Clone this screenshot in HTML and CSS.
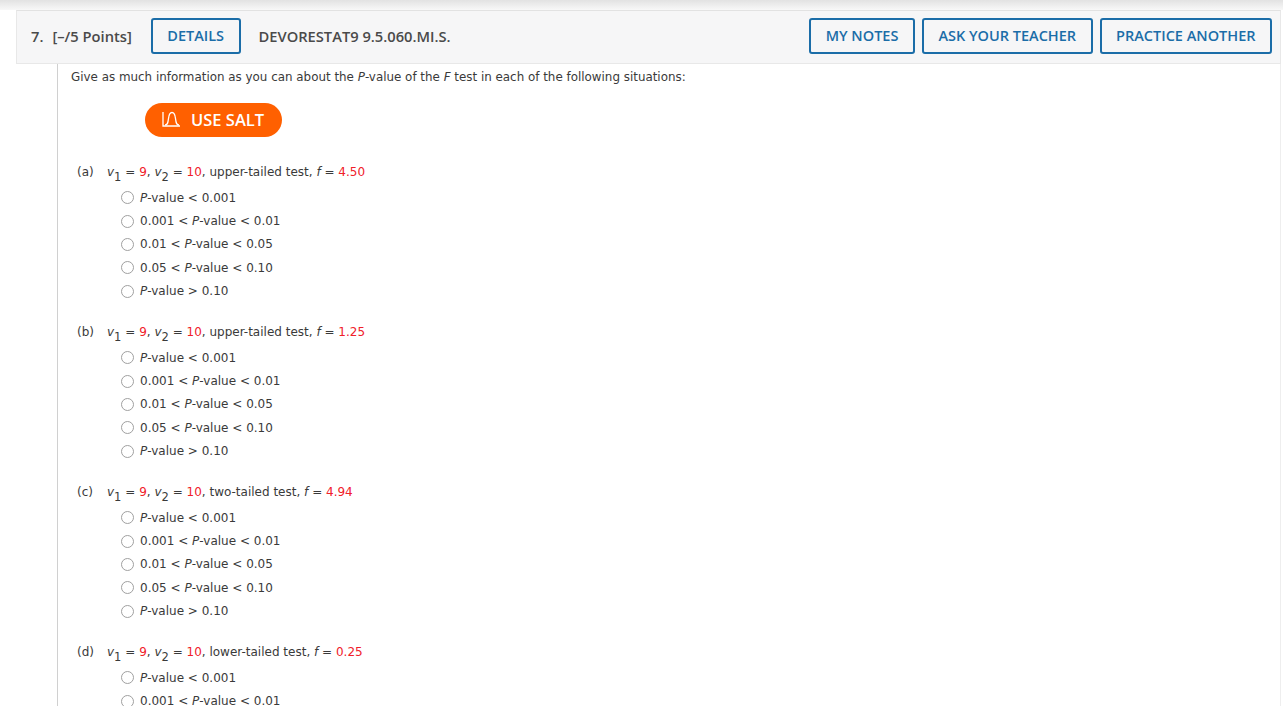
FILE: index.html
```html
<!DOCTYPE html>
<html lang="en">
<head>
<meta charset="utf-8">
<title>Question 7</title>
<link rel="stylesheet" href="styles.css">
</head>
<body>
<div class="shade"></div>
<header class="bar">
  <span class="num">7.</span>
  <span class="pts">[–/5 Points]</span>
  <button class="btn details">DETAILS</button>
  <span class="code">DEVORESTAT9 9.5.060.MI.S.</span>
  <div class="actions">
    <button class="btn">MY NOTES</button>
    <button class="btn">ASK YOUR TEACHER</button>
    <button class="btn">PRACTICE ANOTHER</button>
  </div>
</header>
<main class="content">
  <p class="intro">Give as much information as you can about the <i>P</i>-value of the <i>F</i> test in each of the following situations:</p>
  <button class="salt">
    <svg class="salt-icon" width="19" height="18" viewBox="0 0 19 18" fill="none" stroke="#fff" stroke-width="1.300"><path d="M2 2v14h17"/><path d="M4 15c2.500 0 3-2 3.500-6.500S9 2.500 11 2.500s3 1.500 3.500 6 1 6.500 3.500 6.500"/></svg>
    USE SALT
  </button>
  <section class="part">
    <div class="q"><span class="lbl">(a)</span><span><i>v</i><sub>1</sub> = <b>9</b>, <i>v</i><sub>2</sub> = <b>10</b>, upper-tailed test, <i>f</i> = <b>4.50</b></span></div>
    <label class="opt"><span class="radio"></span><span><i>P</i>-value &lt; 0.001</span></label>
    <label class="opt"><span class="radio"></span><span>0.001 &lt; <i>P</i>-value &lt; 0.01</span></label>
    <label class="opt"><span class="radio"></span><span>0.01 &lt; <i>P</i>-value &lt; 0.05</span></label>
    <label class="opt"><span class="radio"></span><span>0.05 &lt; <i>P</i>-value &lt; 0.10</span></label>
    <label class="opt"><span class="radio"></span><span><i>P</i>-value &gt; 0.10</span></label>
  </section>
  <section class="part">
    <div class="q"><span class="lbl">(b)</span><span><i>v</i><sub>1</sub> = <b>9</b>, <i>v</i><sub>2</sub> = <b>10</b>, upper-tailed test, <i>f</i> = <b>1.25</b></span></div>
    <label class="opt"><span class="radio"></span><span><i>P</i>-value &lt; 0.001</span></label>
    <label class="opt"><span class="radio"></span><span>0.001 &lt; <i>P</i>-value &lt; 0.01</span></label>
    <label class="opt"><span class="radio"></span><span>0.01 &lt; <i>P</i>-value &lt; 0.05</span></label>
    <label class="opt"><span class="radio"></span><span>0.05 &lt; <i>P</i>-value &lt; 0.10</span></label>
    <label class="opt"><span class="radio"></span><span><i>P</i>-value &gt; 0.10</span></label>
  </section>
  <section class="part">
    <div class="q"><span class="lbl">(c)</span><span><i>v</i><sub>1</sub> = <b>9</b>, <i>v</i><sub>2</sub> = <b>10</b>, two-tailed test, <i>f</i> = <b>4.94</b></span></div>
    <label class="opt"><span class="radio"></span><span><i>P</i>-value &lt; 0.001</span></label>
    <label class="opt"><span class="radio"></span><span>0.001 &lt; <i>P</i>-value &lt; 0.01</span></label>
    <label class="opt"><span class="radio"></span><span>0.01 &lt; <i>P</i>-value &lt; 0.05</span></label>
    <label class="opt"><span class="radio"></span><span>0.05 &lt; <i>P</i>-value &lt; 0.10</span></label>
    <label class="opt"><span class="radio"></span><span><i>P</i>-value &gt; 0.10</span></label>
  </section>
  <section class="part">
    <div class="q"><span class="lbl">(d)</span><span><i>v</i><sub>1</sub> = <b>9</b>, <i>v</i><sub>2</sub> = <b>10</b>, lower-tailed test, <i>f</i> = <b>0.25</b></span></div>
    <label class="opt"><span class="radio"></span><span><i>P</i>-value &lt; 0.001</span></label>
    <label class="opt"><span class="radio"></span><span>0.001 &lt; <i>P</i>-value &lt; 0.01</span></label>
  </section>
</main>
</body>
</html>
```
FILE: styles.css
```css
html, body { margin: 0; padding: 0; height: 706px; overflow: hidden; background: #fff; }
body { font-family: "DejaVu Sans", sans-serif; font-size: 12px; color: #3a3a3a; }
.shade { height: 10px; background: linear-gradient(#e2e2e2, #f8f8f8); }
.bar {
  box-sizing: border-box; height: 54px; margin: 0 2px 0 16px; padding: 7px 8px 0 14px;
  display: flex; align-items: flex-start; background: #f6f6f7;
  border: 1px solid #e8e8e8; border-top-color: #e2e2e2;
  font-family: "Open Sans", sans-serif; font-weight: 600; font-size: 14.7px; color: #4a4a4a;
}
.num, .pts, .code { line-height: 36px; }
.num { margin-right: 9px; }
.pts { margin-right: 19px; }
.code { margin-left: 18px; }
.btn {
  box-sizing: border-box; height: 36px; padding: 0 14.500px 1px; border: 2px solid #1b6da8; border-radius: 3px;
  background: #f6f6f7; color: #1b6da8; font-family: "Open Sans", sans-serif; font-weight: 600; font-size: 14.500px;
}
.actions { margin-left: auto; display: flex; gap: 7px; }
.content {
  margin: 0 2px 0 57px; padding: 5px 0 0 13px; height: 660px; overflow: hidden;
  border-left: 1px solid #d0d0d0; border-right: 1px solid #eee;
}
.intro { margin: 0; font-size: 11.900px; line-height: 16px; }
.salt {
  display: flex; align-items: center; gap: 11px; box-sizing: border-box;
  width: 137px; height: 34px; margin: 18px 0 0 74px; padding: 0 0 2px 16px;
  border: 0; border-radius: 17px; background: #ff6000; color: #fff;
  font-family: "Open Sans", sans-serif; font-weight: 600; font-size: 16.500px;
}
.salt-icon { flex: none; }
.part { height: 160px; }
.part:first-of-type { margin-top: 26px; }
.q { display: flex; box-sizing: border-box; height: 23px; padding: 1px 0 0 6px; line-height: 17px; }
.lbl { width: 30px; }
.q b { font-weight: 400; color: #f0202a; }
.q sub { font-size: 11.500px; line-height: 0; vertical-align: -5px; }
.opt { display: flex; align-items: center; height: 23.4px; padding-left: 50px; }
.radio {
  box-sizing: border-box; width: 13px; height: 13px; margin-right: 6px; border: 1.5px solid #a0a0a0;
  border-radius: 50%; background: #fff;
}
```
